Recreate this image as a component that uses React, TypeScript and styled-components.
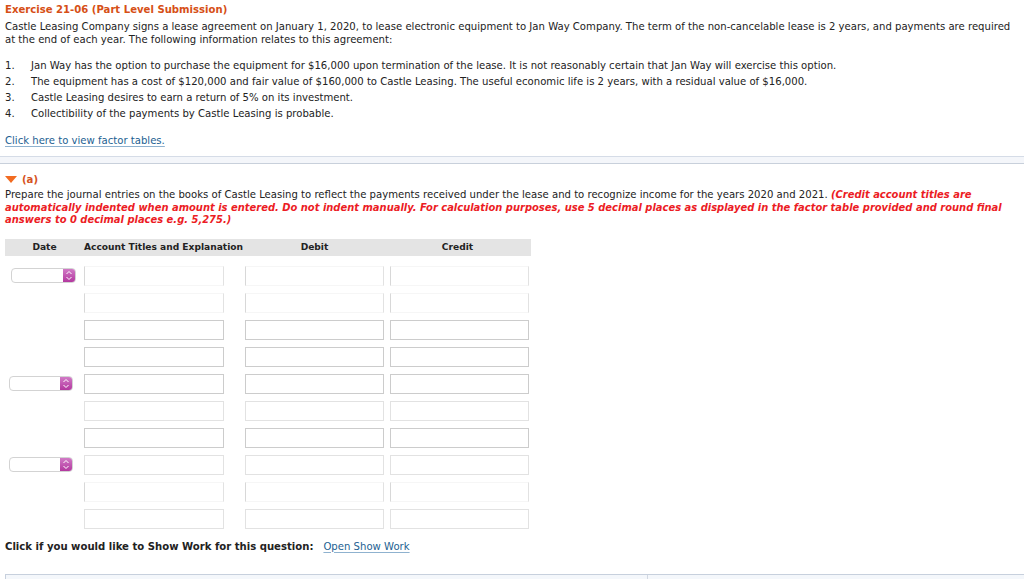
import React from "react";
import styled, { createGlobalStyle } from "styled-components";

const GlobalStyle = createGlobalStyle`
  html, body { margin: 0; padding: 0; background: #fff; }
  body {
    font-family: "DejaVu Sans", Verdana, sans-serif;
    font-size: 10.1px;
    color: #222;
  }
  * { box-sizing: border-box; }
`;

const Page = styled.div`
  width: 1024px;
  overflow: hidden;
`;

const Section = styled.div`
  padding: 0 5px;
`;

const Title = styled.div`
  margin-top: 3px;
  font-weight: bold;
  color: #d64f16;
  line-height: 13px;
`;

const Para = styled.p`
  margin: 4px 0 0;
  line-height: 13px;
`;

const List = styled.ol`
  list-style: none;
  margin: 13px 0 0;
  padding: 0;
  display: flex;
  flex-direction: column;
  gap: 3px;
`;

const Item = styled.li`
  display: grid;
  grid-template-columns: 26px 1fr;
  line-height: 13px;
`;

const Link = styled.a`
  color: #1d5f92;
  text-decoration: underline;
  text-decoration-color: #8fb2cf;
  text-underline-offset: 2px;
  cursor: pointer;
`;

const LinkLine = styled.div`
  margin-top: 14px;
  line-height: 13px;
`;

const Divider = styled.div`
  margin-top: 9px;
  height: 8px;
  border-top: 1px solid #d5dce7;
  border-bottom: 1px solid #c8d0db;
  background: #f4f6fa;
`;

const PartHead = styled.div`
  margin-top: 9px;
  display: flex;
  align-items: center;
  gap: 5px;
  font-weight: bold;
  color: #d6531e;
  line-height: 13px;
`;

const Instructions = styled.p`
  margin: 3px 0 0;
  line-height: 12.5px;
`;

const Red = styled.span`
  color: #ec1c24;
  font-weight: bold;
  font-style: italic;
  font-size: 9.95px;
`;

const Table = styled.div`
  margin-top: 12px;
  width: 526px;
`;

const Cols = `
  display: grid;
  grid-template-columns: 79px 161px 139px 147px;
`;

const HeadRow = styled.div`
  ${Cols}
  height: 17px;
  background: #e4e4e4;
  font-weight: bold;
  font-size: 9.1px;
  align-items: center;
`;

const HeadCell = styled.div<{ $shift?: number }>`
  text-align: center;
  white-space: nowrap;
  padding-right: ${(p) => p.$shift ?? 0}px;
`;

const Body = styled.div`
  margin-top: 10px;
  display: flex;
  flex-direction: column;
  gap: 7px;
`;

const Row = styled.div`
  ${Cols}
  height: 20px;
  align-items: center;
`;

const Cell = styled.div<{ $pad?: number }>`
  height: 20px;
  padding-left: ${(p) => p.$pad ?? 0}px;
  display: flex;
  align-items: center;
`;

const Input = styled.div<{ $w: number; $faint?: boolean; $light?: boolean }>`
  width: ${(p) => p.$w}px;
  height: 20px;
  background: #fff;
  border: 1px solid
    ${(p) => (p.$faint ? "#f6f6f6" : p.$light ? "#e2e2e2" : "#cccccc")};
  border-left-color: ${(p) => (p.$faint ? "#d8d8d8" : p.$light ? "#e2e2e2" : "#cccccc")};
  border-right-color: ${(p) => (p.$faint ? "#e2e2e2" : p.$light ? "#e2e2e2" : "#cccccc")};
`;

const Select = styled.div<{ $left: number; $w: number }>`
  margin-left: ${(p) => p.$left}px;
  width: ${(p) => p.$w}px;
  height: 15px;
  display: flex;
  border: 1px solid #d3d3d3;
  border-radius: 4px;
  overflow: hidden;
  background: #fff;
`;

const SelectField = styled.div`
  flex: 1;
`;

const SelectButton = styled.div`
  width: 12px;
  background: linear-gradient(#d17ac6, #b3389f);
  display: flex;
  align-items: center;
  justify-content: center;
`;

const Footer = styled.div`
  margin-top: 11px;
  display: flex;
  gap: 10px;
  line-height: 13px;
`;

const Bold = styled.span`
  font-weight: bold;
`;

const BottomBar = styled.div`
  margin: 21px 0 0 5px;
  height: 20px;
  display: grid;
  grid-template-columns: 642px 1fr;
  border-top: 1px solid #c7d0dd;
  border-left: 1px solid #c7d0dd;
  background: #f4f7fb;
`;

const BarCell = styled.div`
  border-right: 1px solid #d2d8e2;
`;

const Triangle = () => (
  <svg width="12" height="8" viewBox="0 0 12 8">
    <polygon points="0,0 12,0 6,7" fill="#f26b21" />
  </svg>
);

const Arrows = () => (
  <svg width="8" height="11" viewBox="0 0 8 11">
    <polyline points="1.5,4 4,1.5 6.5,4" fill="none" stroke="#fff" strokeWidth="1" />
    <polyline points="1.5,7 4,9.5 6.5,7" fill="none" stroke="#fff" strokeWidth="1" />
  </svg>
);

type RowSpec = { select?: [number, number]; faint?: boolean; light?: boolean };

const rows: RowSpec[] = [
  { select: [6, 65], faint: true },
  { faint: true },
  {},
  {},
  { select: [4, 64] },
  { light: true },
  {},
  { select: [4, 64], light: true },
  { faint: true },
  { light: true },
];

export default function App() {
  return (
    <Page>
      <GlobalStyle />
      <Section>
        <Title>Exercise 21-06 (Part Level Submission)</Title>
        <Para>
          Castle Leasing Company signs a lease agreement on January 1, 2020, to lease electronic
          equipment to Jan Way Company. The term of the non-cancelable lease is 2 years, and
          payments are required at the end of each year. The following information relates to
          this agreement:
        </Para>
        <List>
          <Item>
            <span>1.</span>
            <span>
              Jan Way has the option to purchase the equipment for $16,000 upon termination of the
              lease. It is not reasonably certain that Jan Way will exercise this option.
            </span>
          </Item>
          <Item>
            <span>2.</span>
            <span>
              The equipment has a cost of $120,000 and fair value of $160,000 to Castle Leasing. The
              useful economic life is 2 years, with a residual value of $16,000.
            </span>
          </Item>
          <Item>
            <span>3.</span>
            <span>Castle Leasing desires to earn a return of 5% on its investment.</span>
          </Item>
          <Item>
            <span>4.</span>
            <span>Collectibility of the payments by Castle Leasing is probable.</span>
          </Item>
        </List>
        <LinkLine>
          <Link>Click here to view factor tables.</Link>
        </LinkLine>
      </Section>
      <Divider />
      <Section>
        <PartHead>
          <Triangle />
          <span>(a)</span>
        </PartHead>
        <Instructions>
          Prepare the journal entries on the books of Castle Leasing to reflect the payments
          received under the lease and to recognize income for the years 2020 and 2021.{" "}
          <Red>
            (Credit account titles are automatically indented when amount is entered. Do not
            indent manually. For calculation purposes, use 5 decimal places as displayed in the
            factor table provided and round final answers to 0 decimal places e.g. 5,275.)
          </Red>
        </Instructions>
        <Table>
          <HeadRow>
            <HeadCell>Date</HeadCell>
            <HeadCell $shift={6}>Account Titles and Explanation</HeadCell>
            <HeadCell>Debit</HeadCell>
            <HeadCell>Credit</HeadCell>
          </HeadRow>
          <Body>
            {rows.map((r, i) => (
              <Row key={i}>
                <Cell>
                  {r.select && (
                    <Select $left={r.select[0]} $w={r.select[1]}>
                      <SelectField />
                      <SelectButton>
                        <Arrows />
                      </SelectButton>
                    </Select>
                  )}
                </Cell>
                <Cell>
                  <Input $w={140} $faint={r.faint} $light={r.light} />
                </Cell>
                <Cell>
                  <Input $w={139} $faint={r.faint} $light={r.light} />
                </Cell>
                <Cell $pad={6}>
                  <Input $w={139} $faint={r.faint} $light={r.light} />
                </Cell>
              </Row>
            ))}
          </Body>
        </Table>
        <Footer>
          <Bold>Click if you would like to Show Work for this question:</Bold>
          <Link>Open Show Work</Link>
        </Footer>
      </Section>
      <BottomBar>
        <BarCell />
        <div />
      </BottomBar>
    </Page>
  );
}
